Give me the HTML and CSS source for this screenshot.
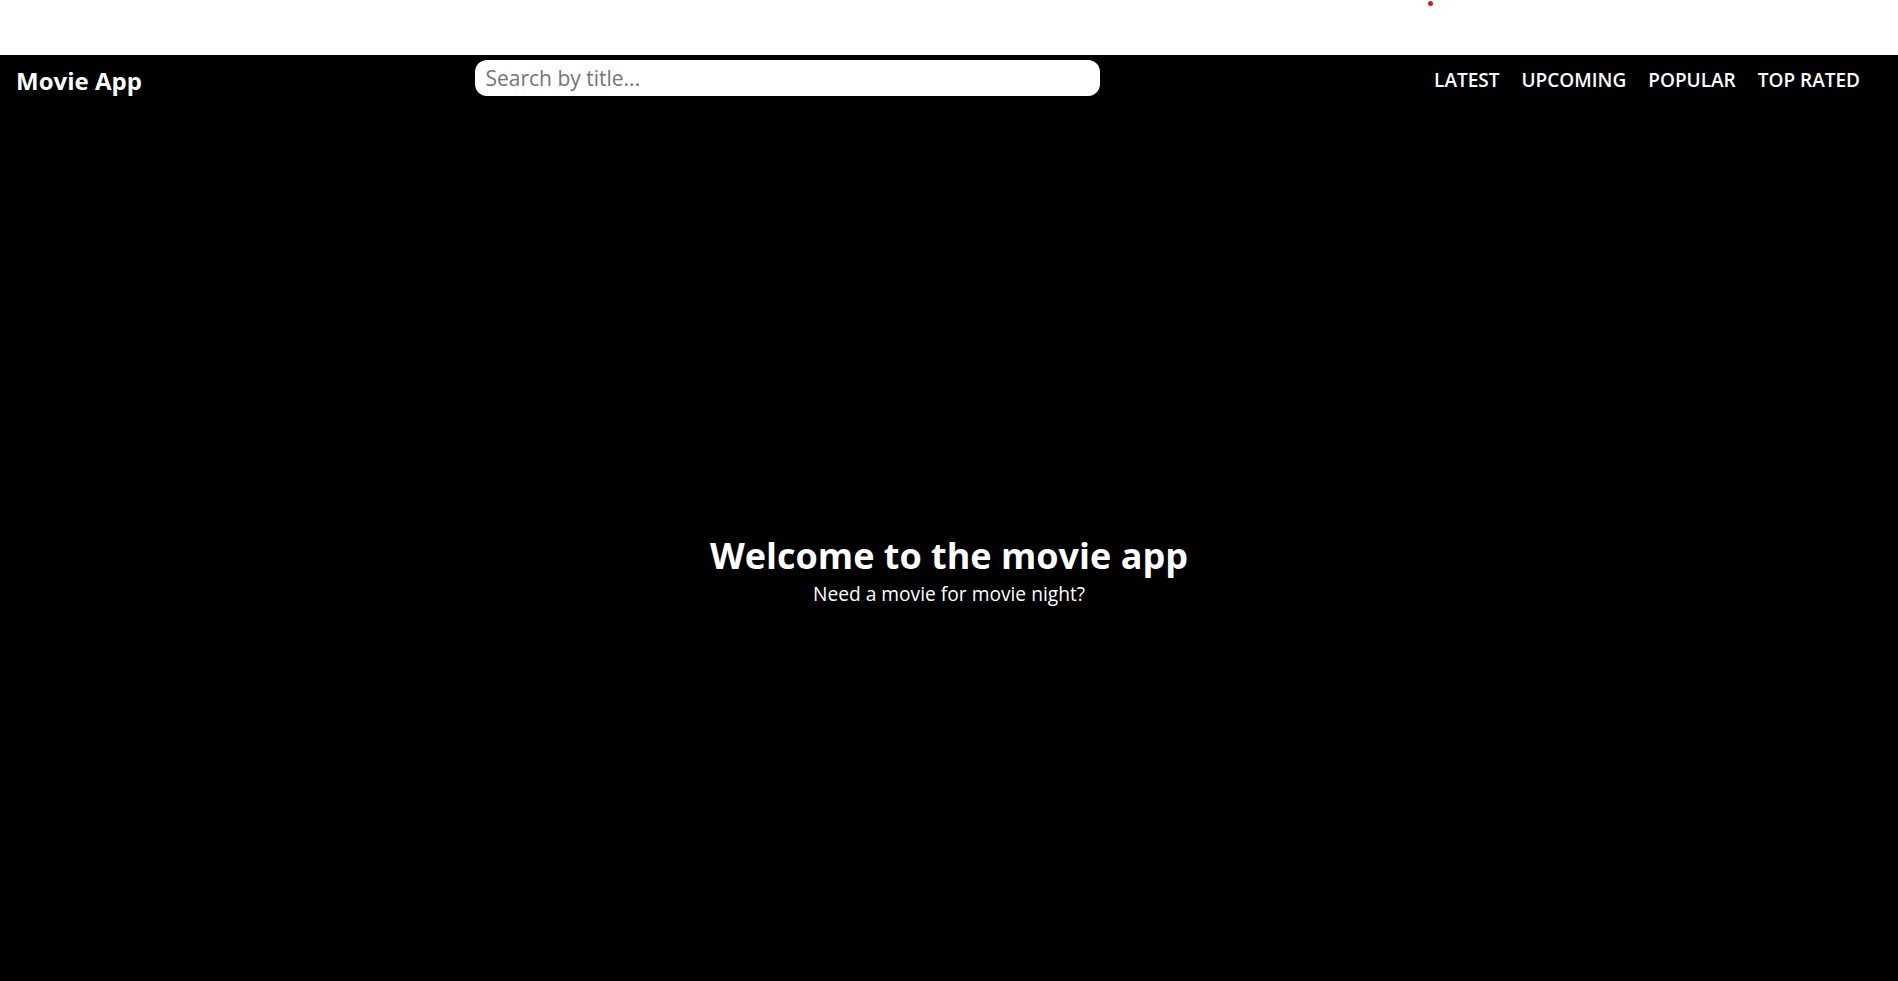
FILE: index.html
```html
<!DOCTYPE html>
<html lang="en">
<head>
<meta charset="utf-8">
<title>Movie App</title>
<link rel="stylesheet" href="styles.css">
</head>
<body>
<div class="topbar"><span class="dot"></span></div>
<nav class="navbar">
  <a class="brand" href="#">Movie App</a>
  <input class="search" type="text" placeholder="Search by title...">
  <ul class="links">
    <li><a href="#">LATEST</a></li>
    <li><a href="#">UPCOMING</a></li>
    <li><a href="#">POPULAR</a></li>
    <li><a href="#">TOP RATED</a></li>
  </ul>
</nav>
<main class="hero">
  <h1 class="hero-title">Welcome to the movie app</h1>
  <p class="hero-sub">Need a movie for movie night?</p>
</main>
</body>
</html>
```
FILE: styles.css
```css
html, body {
  margin: 0;
  padding: 0;
  height: 100%;
}
body {
  background: #000;
  color: #fff;
  font-family: "Open Sans", "Noto Sans", sans-serif;
  overflow: hidden;
}
.topbar {
  position: relative;
  height: 55px;
  background: #fff;
}
.dot {
  position: absolute;
  left: 1428px;
  top: 1px;
  width: 5px;
  height: 5px;
  border-radius: 50%;
  background: #e0141e;
}
.navbar {
  height: 46px;
  display: flex;
  align-items: center;
  justify-content: space-between;
  padding: 0 38px 0 16px;
  background: #000;
}
.brand {
  color: #fff;
  text-decoration: none;
  font-weight: 700;
  font-size: 24px;
  padding-top: 4px;
}
.search {
  width: 625px;
  height: 36px;
  box-sizing: border-box;
  border: none;
  outline: none;
  border-radius: 12px;
  padding: 0 10px;
  background: #fff;
  font-family: "Open Sans", "Noto Sans", sans-serif;
  font-size: 21px;
  color: #333;
}
.search::placeholder {
  color: #757575;
}
.links {
  display: flex;
  gap: 22px;
  list-style: none;
  margin: 0;
  padding: 4px 0 0;
}
.links a {
  color: #fff;
  text-decoration: none;
  font-weight: 600;
  font-size: 19px;
}
.hero {
  display: flex;
  flex-direction: column;
  align-items: center;
  padding-top: 432px;
}
.hero-title {
  margin: 0;
  font-size: 36px;
  line-height: 46px;
  font-weight: 700;
}
.hero-sub {
  margin: 3px 0 0;
  font-size: 19.2px;
  line-height: 23px;
}
```
